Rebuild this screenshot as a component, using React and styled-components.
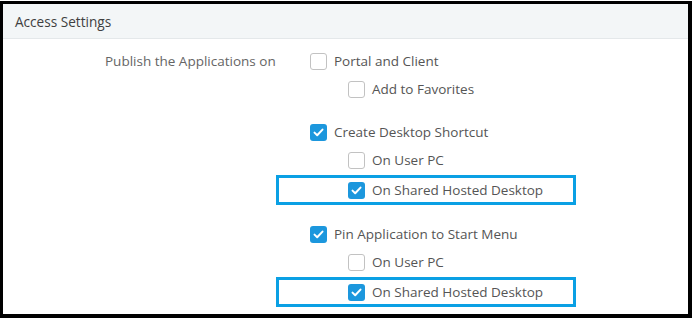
import React from 'react'
import styled, { createGlobalStyle } from 'styled-components'

const GlobalStyle = createGlobalStyle`
  html, body {
    margin: 0;
    padding: 0;
    background: #ffffff;
  }
  body {
    font-family: "Open Sans", "Noto Sans", sans-serif;
  }
`

const Frame = styled.div`
  box-sizing: border-box;
  width: 692px;
  height: 317px;
  margin-top: 1px;
  border: 3px solid #000;
  border-right-width: 4px;
  border-bottom-width: 4px;
  background: #fff;
  display: flex;
  flex-direction: column;
`

const Header = styled.div`
  height: 35px;
  box-sizing: border-box;
  background: #f3f6f7;
  border-bottom: 1px solid #e4e8ea;
  display: flex;
  align-items: center;
  padding-left: 12px;
  font-size: 13.6px;
  color: #3f3f3f;
`

const Body = styled.div`
  display: flex;
  padding-top: 8px;
`

const Label = styled.div`
  box-sizing: border-box;
  width: 307px;
  height: 28px;
  display: flex;
  align-items: center;
  padding-left: 102px;
  font-size: 13.5px;
  color: #656565;
`

const Options = styled.div`
  display: flex;
  flex-direction: column;
  gap: 15px;
`

const Group = styled.div`
  display: flex;
  flex-direction: column;
`

const Row = styled.label`
  height: 28px;
  display: flex;
  align-items: center;
  gap: 7px;
  padding-left: ${p => (p.$nested ? 38 : 0)}px;
  font-size: 13.5px;
  color: #555;
`

const Highlight = styled.div`
  box-sizing: border-box;
  width: 300px;
  height: 30px;
  margin: 1px 0 0 -34px;
  border: 3px solid #0aa0e4;
  display: flex;
  align-items: center;
  gap: 7px;
  padding-left: 69px;
  font-size: 13.5px;
  color: #555;
`

const Box = styled.span`
  box-sizing: border-box;
  width: 17px;
  height: 17px;
  border-radius: 3px;
  border: ${p => (p.$checked ? 'none' : '1.5px solid #c2c2c2')};
  background: ${p => (p.$checked ? '#1c97dd' : '#fff')};
  display: inline-flex;
  align-items: center;
  justify-content: center;
  flex-shrink: 0;
`

function Check ({ checked }) {
  return (
    <Box $checked={checked}>
      {checked && (
        <svg width='11' height='9' viewBox='0 0 11 9'>
          <path d='M1.5 4.6 L4.2 7.2 L9.5 1.6' fill='none' stroke='#fff' strokeWidth='2' strokeLinecap='round' strokeLinejoin='round' />
        </svg>
      )}
    </Box>
  )
}

function Option ({ checked, nested, children }) {
  return (
    <Row $nested={nested}>
      <Check checked={checked} />
      {children}
    </Row>
  )
}

function Marked ({ children }) {
  return (
    <Highlight>
      <Check checked />
      {children}
    </Highlight>
  )
}

export default function App () {
  return (
    <>
      <GlobalStyle />
      <Frame>
        <Header>Access Settings</Header>
        <Body>
          <Label>Publish the Applications on</Label>
          <Options>
            <Group>
              <Option>Portal and Client</Option>
              <Option nested>Add to Favorites</Option>
            </Group>
            <Group>
              <Option checked>Create Desktop Shortcut</Option>
              <Option nested>On User PC</Option>
              <Marked>On Shared Hosted Desktop</Marked>
            </Group>
            <Group>
              <Option checked>Pin Application to Start Menu</Option>
              <Option nested>On User PC</Option>
              <Marked>On Shared Hosted Desktop</Marked>
            </Group>
          </Options>
        </Body>
      </Frame>
    </>
  )
}
